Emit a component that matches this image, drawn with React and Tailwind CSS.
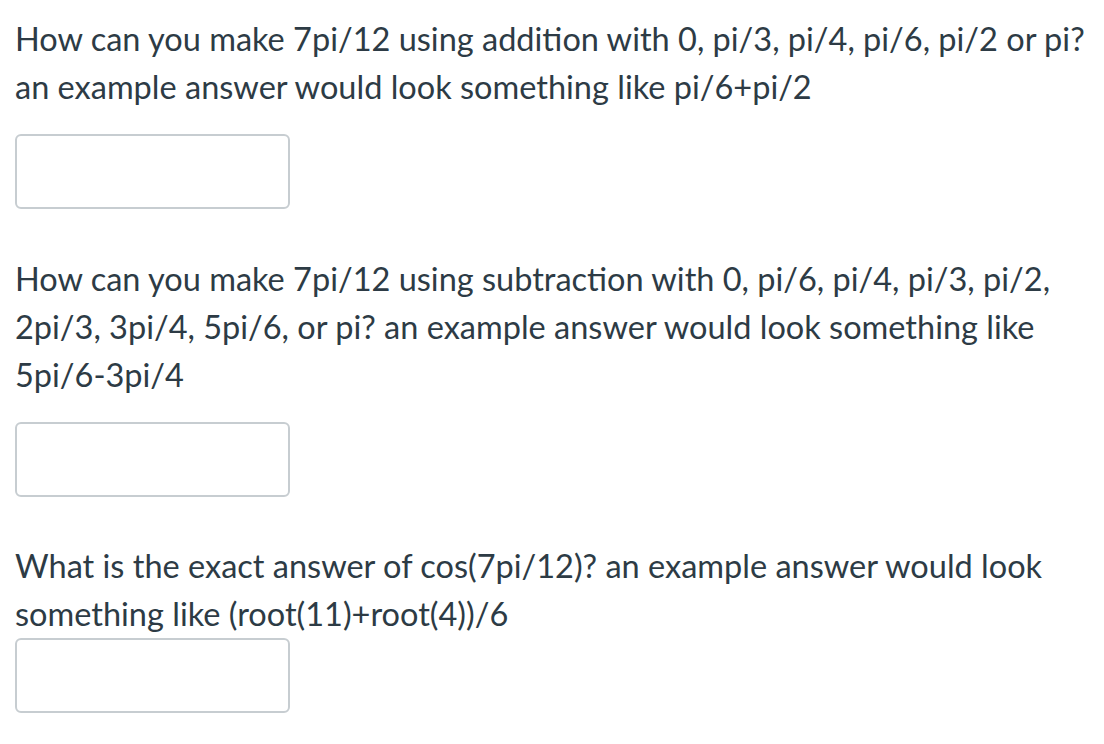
export default function App() {
  const questions = [
    'How can you make 7pi/12 using addition with 0, pi/3, pi/4, pi/6, pi/2 or pi? an example answer would look something like pi/6+pi/2',
    'How can you make 7pi/12 using subtraction with 0, pi/6, pi/4, pi/3, pi/2, 2pi/3, 3pi/4, 5pi/6, or pi? an example answer would look something like 5pi/6-3pi/4',
    'What is the exact answer of cos(7pi/12)? an example answer would look something like (root(11)+root(4))/6',
  ]

  return (
    <div className="min-h-screen bg-white pl-[15px] pt-[15px] text-[#2d3b45] font-['Lato',sans-serif]">
      <div className="w-[1080px]">
        <p className="text-[32.5px] leading-[48px]">{questions[0]}</p>
        <input type="text" className="mt-[23px] block h-[75px] w-[275px] rounded-[6px] border-2 border-[#c7cdd1] bg-white px-3 outline-none" />

        <p className="mt-[46px] text-[32.5px] leading-[48px]">{questions[1]}</p>
        <input type="text" className="mt-[23px] block h-[75px] w-[275px] rounded-[6px] border-2 border-[#c7cdd1] bg-white px-3 outline-none" />

        <p className="mt-[45px] text-[32.5px] leading-[48px]">{questions[2]}</p>
        <input type="text" className="block h-[75px] w-[275px] rounded-[6px] border-2 border-[#c7cdd1] bg-white px-3 outline-none" />
      </div>
    </div>
  )
}
